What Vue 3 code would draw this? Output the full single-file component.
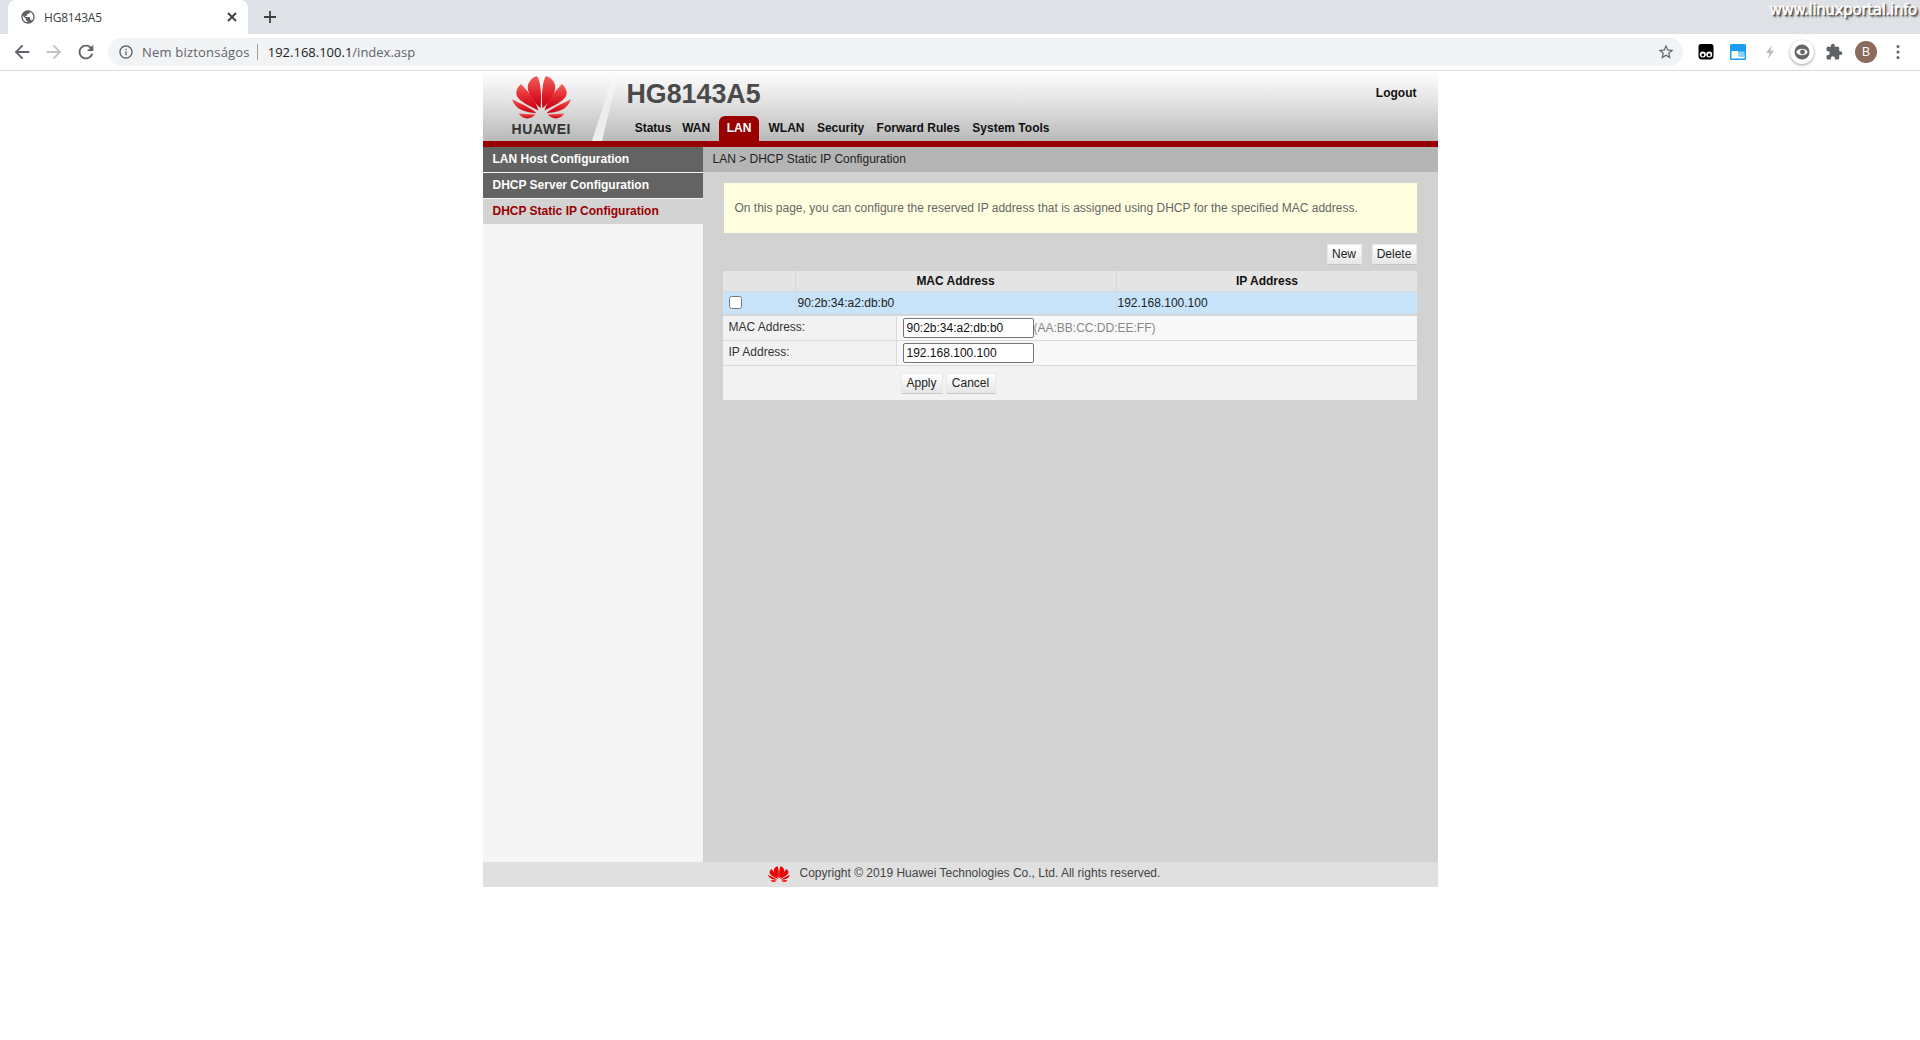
<template>
  <div class="page">
    <!-- browser chrome -->
    <div class="tabstrip">
      <div class="tab">
        <svg class="favicon" viewBox="0 0 24 24"><path :d="icons.globe" /></svg>
        <span class="tab-title">HG8143A5</span>
        <svg class="tab-close" viewBox="0 0 12 12"><path d="M2 2l8 8M10 2l-8 8" /></svg>
      </div>
      <svg class="tab-new" viewBox="0 0 14 14"><path d="M7 1v12M1 7h12" /></svg>
      <div class="watermark">www.linuxportal.info</div>
    </div>

    <div class="toolbar">
      <svg class="nav-icon" viewBox="0 0 24 24"><path :d="icons.arrow" /></svg>
      <svg class="nav-icon off" viewBox="0 0 24 24"><path :d="icons.arrow" transform="matrix(-1 0 0 1 24 0)" /></svg>
      <svg class="nav-icon" viewBox="0 0 24 24"><path :d="icons.reload" /></svg>

      <div class="omnibox">
        <svg class="info" viewBox="0 0 24 24"><path :d="icons.info" /></svg>
        <span class="secure">Nem biztonságos</span>
        <span class="sep"></span>
        <span class="url">192.168.100.1<span class="url-path">/index.asp</span></span>
        <svg class="star" viewBox="0 0 24 24"><path :d="icons.star" /></svg>
      </div>

      <div class="extensions">
        <div class="slot">
          <svg class="ext" viewBox="0 0 16 16">
            <path d="M3 0h10a2.500 2.500 0 0 1 2.500 2.500V12a3.500 3.500 0 0 1-3.500 3.500H4A3.500 3.500 0 0 1 .5 12V2.500A2.500 2.500 0 0 1 3 0z" fill="#000" />
            <circle cx="4.800" cy="10.500" r="3" fill="#fff" />
            <circle cx="11.200" cy="10.500" r="3" fill="#fff" />
            <circle cx="4.800" cy="11" r="1.400" fill="#000" />
            <circle cx="11.200" cy="11" r="1.400" fill="#000" />
          </svg>
        </div>
        <div class="slot">
          <svg class="ext" viewBox="0 0 16 16">
            <rect width="16" height="16" rx="1.500" fill="#1a9cf0" />
            <path d="M1.500 7h6l1.400 1.500v2.500h5.600v3.500h-13z" fill="#fff" />
            <path d="M8 7.500h6.500V13H9l-1-1.500z" fill="#8fd3fa" />
          </svg>
        </div>
        <div class="slot">
          <svg class="ext" viewBox="0 0 16 16"><path d="M10 1L4 9h3.500l-1.500 6 6-8.500H8.500z" fill="#bbb" /></svg>
        </div>
        <div class="slot">
          <div class="ext-round">
            <svg class="ext" viewBox="0 0 16 16">
              <circle cx="8" cy="8" r="7.500" fill="#666" />
              <ellipse cx="8" cy="8" rx="5.500" ry="3.200" fill="#fff" />
              <circle cx="8.500" cy="8" r="2.400" fill="#666" />
            </svg>
          </div>
        </div>
        <div class="slot">
          <svg class="puzzle" viewBox="0 0 24 24"><path :d="icons.puzzle" /></svg>
        </div>
        <div class="slot"><div class="avatar">B</div></div>
        <div class="slot">
          <svg class="dots" viewBox="0 0 4 16">
            <circle cx="2" cy="2.500" r="1.500" />
            <circle cx="2" cy="8" r="1.500" />
            <circle cx="2" cy="13.500" r="1.500" />
          </svg>
        </div>
      </div>
    </div>

    <!-- router page -->
    <div class="frame">
      <header class="head">
        <div class="brand">
          <svg class="flower" viewBox="66 18 178 135">
            <defs>
              <linearGradient id="petal" x1="0" y1="0" x2="0" y2="1">
                <stop offset="0" stop-color="#f2605a" />
                <stop offset="0.55" stop-color="#e0202a" />
                <stop offset="1" stop-color="#c40010" />
              </linearGradient>
            </defs>
            <path v-for="(p, i) in petals" :key="i" :d="p" fill="url(#petal)" />
            <g transform="matrix(-1 0 0 1 310 0)">
              <path v-for="(p, i) in petals" :key="i" :d="p" fill="url(#petal)" />
            </g>
          </svg>
          <div class="brand-name">HUAWEI</div>
        </div>
        <svg class="slash" viewBox="0 0 30 66">
          <defs>
            <linearGradient id="slashfade" x1="0" y1="0" x2="0" y2="1">
              <stop offset="0" stop-color="#fff" stop-opacity="0.15" />
              <stop offset="1" stop-color="#fff" stop-opacity="0.8" />
            </linearGradient>
          </defs>
          <path d="M21 0h5L10 66H0z" fill="url(#slashfade)" />
        </svg>
        <div class="head-main">
          <div class="head-top">
            <h1>HG8143A5</h1>
            <a class="logout">Logout</a>
          </div>
          <nav class="menu">
            <a v-for="m in menu" :key="m" :class="{ active: m === 'LAN' }">{{ m }}</a>
          </nav>
        </div>
      </header>

      <div class="body">
        <aside class="side">
          <div v-for="s in sideItems" :key="s" class="side-item" :class="{ current: s === sideItems[2] }">{{ s }}</div>
        </aside>

        <main class="content">
          <div class="crumb">LAN &gt; DHCP Static IP Configuration</div>
          <div class="inner">
            <div class="note">On this page, you can configure the reserved IP address that is assigned using DHCP for the specified MAC address.</div>

            <div class="actions">
              <button class="btn">New</button>
              <button class="btn">Delete</button>
            </div>

            <div class="row thead">
              <div></div>
              <div>MAC Address</div>
              <div>IP Address</div>
            </div>
            <div class="row selected">
              <div class="check-cell"><input type="checkbox" class="check" /></div>
              <div>90:2b:34:a2:db:b0</div>
              <div>192.168.100.100</div>
            </div>

            <div class="form">
              <div class="form-row">
                <label>MAC Address:</label>
                <div class="field">
                  <input class="text" value="90:2b:34:a2:db:b0" />
                  <span class="hint">(AA:BB:CC:DD:EE:FF)</span>
                </div>
              </div>
              <div class="form-row">
                <label>IP Address:</label>
                <div class="field">
                  <input class="text" value="192.168.100.100" />
                </div>
              </div>
              <div class="form-btns">
                <button class="btn apply">Apply</button>
                <button class="btn cancel">Cancel</button>
              </div>
            </div>
          </div>
        </main>
      </div>

      <footer class="foot">
        <svg class="foot-logo" viewBox="66 18 178 135">
          <path v-for="(p, i) in petals" :key="i" :d="p" fill="#f00000" />
          <g transform="matrix(-1 0 0 1 310 0)">
            <path v-for="(p, i) in petals" :key="i" :d="p" fill="#f00000" />
          </g>
        </svg>
        <span>Copyright © 2019 Huawei Technologies Co., Ltd. All rights reserved.</span>
      </footer>
    </div>
  </div>
</template>

<script setup>
const menu = ['Status', 'WAN', 'LAN', 'WLAN', 'Security', 'Forward Rules', 'System Tools']

const sideItems = [
  'LAN Host Configuration',
  'DHCP Server Configuration',
  'DHCP Static IP Configuration'
]

// left half of the logo, the right half is mirrored
const petals = [
  'M152 115C130 95 110 70 114 45C118 28 135 18 142 18C150 28 157 70 152 115z',
  'M146 122C115 105 78 90 79 68C80 55 90 45 93 42C105 55 135 85 146 122z',
  'M140 130C110 128 75 120 66 88C90 100 125 115 140 130z',
  'M86 131L137 134C125 148 100 152 86 131z'
]

const icons = {
  globe: 'M12 2C6.48 2 2 6.48 2 12s4.48 10 10 10 10-4.48 10-10S17.52 2 12 2zm-1 17.93c-3.95-.49-7-3.85-7-7.93 0-.62.08-1.21.21-1.79L9 15v1c0 1.1.9 2 2 2v1.93zm6.9-2.54c-.26-.81-1-1.39-1.9-1.39h-1v-3c0-.55-.45-1-1-1H8v-2h2c.55 0 1-.45 1-1V7h2c1.1 0 2-.9 2-2v-.41c2.93 1.19 5 4.06 5 7.41 0 2.08-.8 3.97-2.1 5.39z',
  arrow: 'M20 11H7.83l5.59-5.59L12 4l-8 8 8 8 1.41-1.41L7.83 13H20v-2z',
  reload: 'M17.65 6.35C16.2 4.9 14.21 4 12 4c-4.42 0-7.99 3.58-7.99 8s3.57 8 7.99 8c3.73 0 6.84-2.55 7.73-6h-2.08c-.82 2.33-3.04 4-5.65 4-3.31 0-6-2.69-6-6s2.69-6 6-6c1.66 0 3.14.69 4.22 1.78L13 11h7V4l-2.35 2.35z',
  info: 'M11 7h2v2h-2zm0 4h2v6h-2zm1-9C6.48 2 2 6.48 2 12s4.48 10 10 10 10-4.48 10-10S17.52 2 12 2zm0 18c-4.41 0-8-3.59-8-8s3.59-8 8-8 8 3.59 8 8-3.59 8-8 8z',
  star: 'M22 9.24l-7.19-.62L12 2 9.19 8.63 2 9.24l5.46 4.73L5.82 21 12 17.27 18.18 21l-1.63-7.03L22 9.24zM12 15.4l-3.76 2.27 1-4.28-3.32-2.88 4.38-.38L12 6.1l1.71 4.04 4.38.38-3.32 2.88 1 4.28L12 15.4z',
  puzzle: 'M20.5 11H19V7c0-1.1-.9-2-2-2h-4V3.5C13 2.12 11.88 1 10.5 1S8 2.12 8 3.5V5H4c-1.1 0-1.99.9-1.99 2v3.8H3.5c1.49 0 2.7 1.21 2.7 2.7s-1.21 2.7-2.7 2.7H2V20c0 1.1.9 2 2 2h3.8v-1.5c0-1.49 1.21-2.7 2.7-2.7 1.49 0 2.7 1.21 2.7 2.7V22H17c1.1 0 2-.9 2-2v-4h1.5c1.38 0 2.5-1.12 2.5-2.5S21.88 11 20.5 11z'
}
</script>

<style>
html, body {
  margin: 0;
  background: #fff;
}
</style>

<style scoped>
.page {
  min-height: 1040px;
  background: #fff;
  font-family: "Liberation Sans", Arial, sans-serif;
  font-size: 12px;
  color: #333;
}

/* CHROME */
.tabstrip {
  position: relative;
  height: 34px;
  background: #dee1e6;
  display: flex;
  align-items: flex-end;
  padding-left: 8px;
}

.tab {
  width: 240px;
  height: 34px;
  box-sizing: border-box;
  background: #fff;
  border-radius: 8px 8px 0 0;
  display: flex;
  align-items: center;
  padding: 0 9px 0 12px;
  color: #3c4043;
}

.favicon {
  width: 16px;
  height: 16px;
  fill: #5f6368;
}

.tab-title {
  flex: 1;
  margin-left: 8px;
  font-family: "Open Sans", sans-serif;
  font-size: 12px;
  letter-spacing: -0.2px;
}

.tab-close {
  width: 12px;
  height: 12px;
  stroke: #3c4043;
  stroke-width: 1.8;
  margin-right: 1px;
}

.tab-new {
  width: 14px;
  height: 14px;
  stroke: #3c4043;
  stroke-width: 1.8;
  margin: 0 0 10px 15px;
}

.watermark {
  position: absolute;
  top: 0;
  right: 3px;
  font-family: "DejaVu Sans", sans-serif;
  font-size: 15px;
  line-height: 20px;
  letter-spacing: -0.3px;
  color: #fff;
  -webkit-text-stroke: 0.6px #fff;
  text-shadow: 1px 1px 1px #222, 2px 2px 2px #555;
}

.toolbar {
  box-sizing: border-box;
  background: #fff;
  border-bottom: 1px solid #d9d9dc;
  height: 37px;
  display: flex;
  align-items: center;
  padding-left: 11px;
}

.nav-icon {
  width: 22px;
  height: 22px;
  fill: #5f6368;
  margin-right: 10px;
}

.nav-icon.off {
  fill: #bdc1c6;
}

.omnibox {
  flex: 1;
  height: 28px;
  margin-left: 1px;
  background: #f1f3f4;
  border-radius: 14px;
  display: flex;
  align-items: center;
  padding-left: 10px;
  font-family: "Open Sans", sans-serif;
  font-size: 13px;
  color: #5f6368;
}

.info {
  width: 16px;
  height: 16px;
  fill: #5f6368;
}

.secure {
  margin-left: 8px;
  letter-spacing: 0.2px;
}

.sep {
  width: 1px;
  height: 16px;
  background: #9aa0a6;
  margin: 0 10px 0 7px;
}

.url {
  flex: 1;
  color: #202124;
}

.url-path {
  color: #5f6368;
}

.star {
  width: 18px;
  height: 18px;
  fill: #5f6368;
  margin-right: 8px;
}

.extensions {
  display: flex;
  align-items: center;
  margin: 0 6px 0 7px;
}

.slot {
  width: 32px;
  height: 32px;
  display: flex;
  align-items: center;
  justify-content: center;
}

.ext {
  width: 16px;
  height: 16px;
  flex: none;
}

.puzzle {
  width: 18px;
  height: 18px;
  fill: #5f6368;
}

.ext-round {
  width: 24px;
  height: 24px;
  border-radius: 50%;
  background: #fff;
  box-shadow: 0 1px 3px rgba(0, 0, 0, 0.4);
  display: flex;
  align-items: center;
  justify-content: center;
}

.avatar {
  width: 22px;
  height: 22px;
  border-radius: 50%;
  background: #8c6a5d;
  color: #fff;
  font-size: 12px;
  display: flex;
  align-items: center;
  justify-content: center;
}

.dots {
  width: 4px;
  height: 16px;
  fill: #5f6368;
}

/* FRAME */
.frame {
  width: 955px;
  margin: 0 auto;
}

.head {
  position: relative;
  height: 70px;
  border-bottom: 6px solid #990000;
  background: linear-gradient(#fff, #e2e2e2 45%, #b9b9b9);
  display: flex;
}

.brand {
  width: 146px;
  box-sizing: border-box;
  padding: 5px 0 0 29px;
}

.flower {
  display: block;
  width: 59px;
  height: 45px;
}

.brand-name {
  width: 59px;
  margin-top: 2px;
  text-align: center;
  font-size: 14px;
  line-height: 13px;
  font-weight: bold;
  color: #333;
  letter-spacing: 0.6px;
  white-space: nowrap;
}

.slash {
  position: absolute;
  left: 109px;
  top: 4px;
  width: 30px;
  height: 66px;
}

.head-main {
  flex: 1;
  display: flex;
  flex-direction: column;
  justify-content: space-between;
}

.head-top {
  display: flex;
  justify-content: space-between;
  padding-right: 21px;
}

h1 {
  margin: 8px 0 0 -2px;
  font-size: 26.8px;
  line-height: 30px;
  font-weight: bold;
  color: #4a4a4a;
}

.logout {
  margin-top: 15px;
  font-weight: bold;
  color: #111;
}

.menu {
  display: flex;
  align-items: flex-end;
  height: 25px;
  font-weight: bold;
  color: #111;
}

.menu a {
  padding: 0 6.2px;
  line-height: 24px;
  height: 25px;
}

.menu a:first-child {
  padding-right: 4.6px;
}

.menu a.active {
  background: #990000;
  color: #fff;
  border-radius: 6px 6px 0 0;
  padding: 0 8px;
  margin: 0 3px 0 2.3px;
}

.body {
  display: flex;
  height: 715px;
}

.side {
  width: 220px;
  background: #f5f5f5;
}

.side-item {
  height: 25px;
  line-height: 25px;
  margin-bottom: 1px;
  padding-left: 10px;
  background: #636363;
  color: #fff;
  font-weight: bold;
}

.side-item.current {
  background: #d3d3d3;
  color: #990000;
  margin-bottom: 0;
}

.content {
  flex: 1;
  background: #d2d2d2;
}

.crumb {
  height: 25px;
  line-height: 25px;
  padding-left: 10px;
  background: #b5b5b5;
  color: #222;
}

.inner {
  padding: 11px 21px 0 20px;
}

.note {
  height: 50px;
  line-height: 50px;
  margin-left: 1px;
  padding-left: 11px;
  background: #ffffe0;
  color: #666;
}

.actions {
  display: flex;
  justify-content: flex-end;
  gap: 10px;
  margin-top: 11px;
  height: 27px;
}

.btn {
  height: 21px;
  padding: 0 0 2px;
  border: 1px solid #e9e9e9;
  border-bottom-color: #c8c8c8;
  background: linear-gradient(#fff, #e6e6e6);
  font-family: inherit;
  font-size: 12px;
  color: #222;
}

.actions .btn:first-child {
  width: 35px;
}

.actions .btn:last-child {
  width: 45px;
}

.row {
  display: grid;
  grid-template-columns: 72px 321px 1fr;
}

.row > div {
  border-left: 1px solid #d8d8d8;
  padding-left: 2px;
}

.row > div:first-child {
  border-left: 0;
}

.row > div:last-child {
  padding-left: 1px;
}

.thead {
  height: 20px;
  line-height: 20px;
  background: #e4e4e4;
  font-weight: bold;
  color: #111;
  text-align: center;
}

.thead > div {
  padding-left: 0;
}

.selected {
  height: 22px;
  line-height: 22px;
  background: #c7e4fb;
  color: #222;
  border-top: 1px solid #d8d8d8;
}

.check-cell {
  display: flex;
  align-items: center;
  padding: 0 0 2px 6px !important;
}

.check {
  width: 13px;
  height: 13px;
  margin: 0;
}

.form {
  margin-top: 1px;
  background: #f2f2f2;
}

.form-row {
  display: flex;
  height: 24px;
  background: #f8f8f8;
  border-top: 1px solid #dadada;
}

.form-row label {
  width: 174px;
  box-sizing: border-box;
  padding-left: 6px;
  line-height: 23px;
  background: #f2f2f2;
  border-right: 1px solid #dadada;
  color: #333;
}

.field {
  flex: 1;
  display: flex;
  align-items: center;
  padding-left: 6px;
}

.text {
  width: 131px;
  height: 20px;
  box-sizing: border-box;
  padding: 0 3px;
  border: 1px solid #767676;
  border-radius: 2px;
  background: #fff;
  font-family: inherit;
  font-size: 12px;
  color: #111;
  outline: none;
}

.hint {
  color: #888;
}

.form-btns {
  display: flex;
  gap: 3px;
  height: 35px;
  box-sizing: border-box;
  padding: 7px 0 0 178px;
  border-top: 1px solid #dadada;
}

.apply {
  width: 42px;
}

.cancel {
  width: 50px;
}

/* FOOTER */
.foot {
  height: 25px;
  box-sizing: border-box;
  padding: 0 0 3px 285px;
  background: #e0e0e0;
  display: flex;
  align-items: center;
  color: #444;
}

.foot-logo {
  width: 22px;
  height: 17px;
  margin: 3px 10px 0 0;
}
</style>
